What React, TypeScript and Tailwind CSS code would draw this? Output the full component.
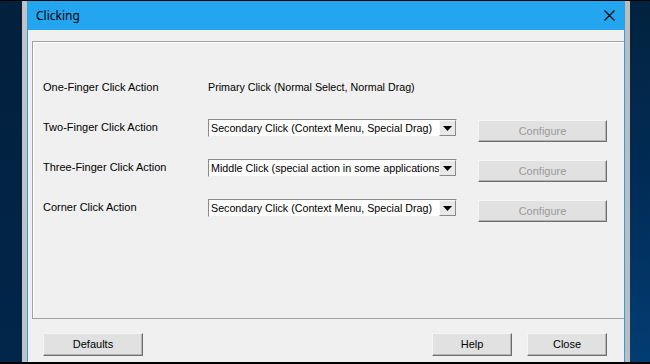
import React from "react";

const font = { fontFamily: '"Liberation Sans", Arial, sans-serif' };

function Btn({ label, w, h = "h-[23px]", disabled }: { label: string; w: string; h?: string; disabled?: boolean }) {
  return (
    <div
      className={`${w} ${h} flex items-center justify-center bg-[#e1e1e1] border border-t-[#f5f5f5] border-l-[#f5f5f5] border-b-[#6e6e6e] border-r-[#6e6e6e] shadow-[inset_-1px_-1px_0_#b4b4b4] text-[11px] ${disabled ? "text-[#9a9a9a]" : "text-black"}`}
    >
      {label}
    </div>
  );
}

function Dropdown({ text }: { text: string }) {
  return (
    <div className="w-[249px] h-[18px] mt-[3px] flex bg-white border border-t-[#8a8a8a] border-l-[#8a8a8a] border-b-[#f0f0f0] border-r-[#f0f0f0]">
      <div className="flex-1 overflow-hidden whitespace-nowrap pl-[2px] text-[10.7px] leading-[16px] text-black">{text}</div>
      <div className="w-[17px] h-[16px] flex items-center justify-center bg-[#e8e8e8] border border-t-[#fafafa] border-l-[#fafafa] border-b-[#8a8a8a] border-r-[#8a8a8a]">
        <svg width="9" height="5" viewBox="0 0 9 5">
          <path d="M0 0 H9 L4.5 5 Z" fill="#000" />
        </svg>
      </div>
    </div>
  );
}

function Row({ label, text }: { label: string; text: string }) {
  return (
    <div className="flex items-start h-[22px]">
      <div className="w-[165px] leading-[22px] text-[11px] text-black whitespace-nowrap">{label}</div>
      <Dropdown text={text} />
      <div className="ml-[21px] mt-[4px]">
        <Btn label="Configure" w="w-[129px]" h="h-[22px]" disabled />
      </div>
    </div>
  );
}

export default function App() {
  return (
    <div className="w-[650px] h-[364px] flex flex-col bg-black overflow-hidden" style={font}>
      <div className="h-[1px] bg-black" />
      <div className="flex h-[361px]">
        <div className="w-[22px] bg-gradient-to-b from-[#03203d] to-[#01264a]" />
        <div className="w-[5px] bg-[#c3c3c3]" />
        <div className="w-[598px] flex flex-col border-x border-[#2b9fe6] bg-[#f0f0f0]">
          <div className="h-[29px] bg-[#24a5f0] flex items-center justify-between pl-[8px] pr-[9px]">
            <span className="text-[12px] text-black" style={{ fontFamily: '"Noto Sans", "Open Sans", sans-serif' }}>
              Clicking
            </span>
            <svg width="11" height="11" viewBox="0 0 11 11">
              <path d="M0.5 0.5 L10.5 10.5 M10.5 0.5 L0.5 10.5" stroke="#000" strokeWidth="1.1" />
            </svg>
          </div>
          <div className="flex-1 flex flex-col pl-[4px] pt-[11px]">
            <div className="h-[278px] border border-r-0 border-[#a0a0a0] shadow-[inset_1px_1px_0_#ffffff] pt-[34px] pl-[10px] flex flex-col gap-[18px]">
              <div className="flex h-[22px] items-center text-[11px] text-black whitespace-nowrap">
                <div className="w-[165px]">One-Finger Click Action</div>
                <div className="text-[10.7px]">Primary Click (Normal Select, Normal Drag)</div>
              </div>
              <Row label="Two-Finger Click Action" text="Secondary Click (Context Menu, Special Drag)" />
              <Row label="Three-Finger Click Action" text="Middle Click (special action in some applications)" />
              <Row label="Corner Click Action" text="Secondary Click (Context Menu, Special Drag)" />
            </div>
            <div className="flex mt-[14px] pl-[11px] pr-[17px]">
              <Btn label="Defaults" w="w-[100px]" />
              <div className="flex-1" />
              <Btn label="Help" w="w-[80px]" />
              <div className="w-[15px]" />
              <Btn label="Close" w="w-[80px]" />
            </div>
          </div>
        </div>
        <div className="w-[5px] bg-[#bdbdbd]" />
        <div className="flex-1 bg-gradient-to-b from-[#02233f] via-[#012c57] to-[#033d73]" />
      </div>
      <div className="h-[2px] bg-black" />
    </div>
  );
}
